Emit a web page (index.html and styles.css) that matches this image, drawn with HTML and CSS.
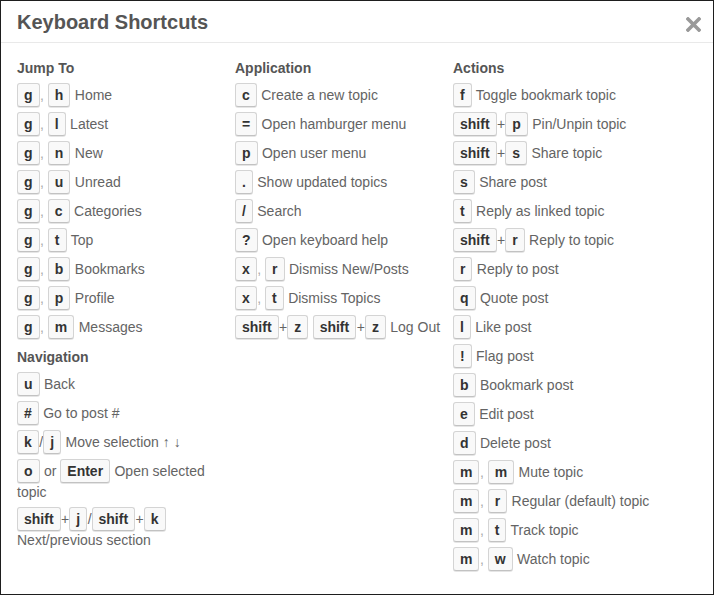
FILE: index.html
```html
<!DOCTYPE html>
<html>
<head>
<meta charset="utf-8">
<link rel="stylesheet" href="styles.css">
</head>
<body>
<div class="modal">
  <div class="modal-header">
    <h3 class="title">Keyboard Shortcuts</h3>
    <button class="close" aria-label="close">
      <svg width="15" height="15" viewBox="0 0 15 15"><path d="M2 2 L13 13 M13 2 L2 13" stroke="#999" stroke-width="3.6" stroke-linecap="square" fill="none"/></svg>
    </button>
  </div>
  <div class="modal-body">
    <div class="col">
      <h4 class="sec">Jump To</h4>
      <ul class="list">
        <li><kbd>g</kbd><span class="sep">, </span><kbd>h</kbd> Home</li>
        <li><kbd>g</kbd><span class="sep">, </span><kbd>l</kbd> Latest</li>
        <li><kbd>g</kbd><span class="sep">, </span><kbd>n</kbd> New</li>
        <li><kbd>g</kbd><span class="sep">, </span><kbd>u</kbd> Unread</li>
        <li><kbd>g</kbd><span class="sep">, </span><kbd>c</kbd> Categories</li>
        <li><kbd>g</kbd><span class="sep">, </span><kbd>t</kbd> Top</li>
        <li><kbd>g</kbd><span class="sep">, </span><kbd>b</kbd> Bookmarks</li>
        <li><kbd>g</kbd><span class="sep">, </span><kbd>p</kbd> Profile</li>
        <li><kbd>g</kbd><span class="sep">, </span><kbd>m</kbd> Messages</li>
      </ul>
      <h4 class="sec next">Navigation</h4>
      <ul class="list">
        <li><kbd>u</kbd> Back</li>
        <li><kbd>#</kbd> Go to post #</li>
        <li><kbd>k</kbd>/<kbd>j</kbd> Move selection &uarr; &darr;</li>
        <li><kbd>o</kbd> or <kbd>Enter</kbd> Open selected topic</li>
        <li><kbd>shift</kbd>+<kbd>j</kbd>/<kbd>shift</kbd>+<kbd>k</kbd> Next/previous section</li>
      </ul>
    </div>
    <div class="col">
      <h4 class="sec">Application</h4>
      <ul class="list">
        <li><kbd>c</kbd> Create a new topic</li>
        <li><kbd>=</kbd> Open hamburger menu</li>
        <li><kbd>p</kbd> Open user menu</li>
        <li><kbd>.</kbd> Show updated topics</li>
        <li><kbd>/</kbd> Search</li>
        <li><kbd>?</kbd> Open keyboard help</li>
        <li><kbd>x</kbd><span class="sep">, </span><kbd>r</kbd> Dismiss New/Posts</li>
        <li><kbd>x</kbd><span class="sep">, </span><kbd>t</kbd> Dismiss Topics</li>
        <li><kbd>shift</kbd>+<kbd>z</kbd> <kbd>shift</kbd>+<kbd>z</kbd> Log Out</li>
      </ul>
    </div>
    <div class="col">
      <h4 class="sec">Actions</h4>
      <ul class="list">
        <li><kbd>f</kbd> Toggle bookmark topic</li>
        <li><kbd>shift</kbd>+<kbd>p</kbd> Pin/Unpin topic</li>
        <li><kbd>shift</kbd>+<kbd>s</kbd> Share topic</li>
        <li><kbd>s</kbd> Share post</li>
        <li><kbd>t</kbd> Reply as linked topic</li>
        <li><kbd>shift</kbd>+<kbd>r</kbd> Reply to topic</li>
        <li><kbd>r</kbd> Reply to post</li>
        <li><kbd>q</kbd> Quote post</li>
        <li><kbd>l</kbd> Like post</li>
        <li><kbd>!</kbd> Flag post</li>
        <li><kbd>b</kbd> Bookmark post</li>
        <li><kbd>e</kbd> Edit post</li>
        <li><kbd>d</kbd> Delete post</li>
        <li><kbd>m</kbd><span class="sep">, </span><kbd>m</kbd> Mute topic</li>
        <li><kbd>m</kbd><span class="sep">, </span><kbd>r</kbd> Regular (default) topic</li>
        <li><kbd>m</kbd><span class="sep">, </span><kbd>t</kbd> Track topic</li>
        <li><kbd>m</kbd><span class="sep">, </span><kbd>w</kbd> Watch topic</li>
      </ul>
    </div>
  </div>
</div>
</body>
</html>
```

FILE: styles.css
```css
* { box-sizing: border-box; }
html, body { margin: 0; padding: 0; background: #fff; }
body {
  font-family: "Liberation Sans", Arial, sans-serif;
  font-size: 14px;
  color: #646464;
}
.modal {
  width: 714px;
  height: 595px;
  border: 1px solid #1e1e1e;
  background: #fff;
  overflow: hidden;
}
.modal-header {
  display: flex;
  justify-content: space-between;
  align-items: flex-start;
  padding: 9px 12px 8px 16px;
  border-bottom: 1px solid #e9e9e9;
}
.title {
  margin: 0;
  font-size: 20px;
  line-height: 24px;
  font-weight: bold;
  color: #555;
}
.close {
  border: 0;
  background: transparent;
  padding: 0;
  margin: 7px 0 0 0;
  width: 15px;
  height: 15px;
  display: block;
  cursor: pointer;
}
.close svg { display: block; }
.modal-body {
  display: grid;
  grid-template-columns: repeat(3, 218px);
  padding: 15px 16px 0 16px;
}
.sec {
  margin: 0 0 5px 0;
  font-size: 14px;
  line-height: 20px;
  font-weight: bold;
  color: #555;
}
.sec.next { margin-top: 8px; }
.list {
  list-style: none;
  margin: 0;
  padding: 0;
}
.list li {
  line-height: 19px;
  margin-bottom: 5px;
}
kbd {
  display: inline-block;
  font-family: "Liberation Sans", Arial, sans-serif;
  font-size: 14px;
  font-weight: bold;
  line-height: 18px;
  padding: 2px 6px;
  margin-right: 0.5px;
  color: #333;
  background: #f9f9f9;
  border: 1px solid #d4d4d4;
  border-bottom-color: #c2c2c2;
  border-radius: 3px;
  box-shadow: 0 1px 0 rgba(0,0,0,0.1);
}
.sep { font-size: 14px; color: #aaa; }
```
